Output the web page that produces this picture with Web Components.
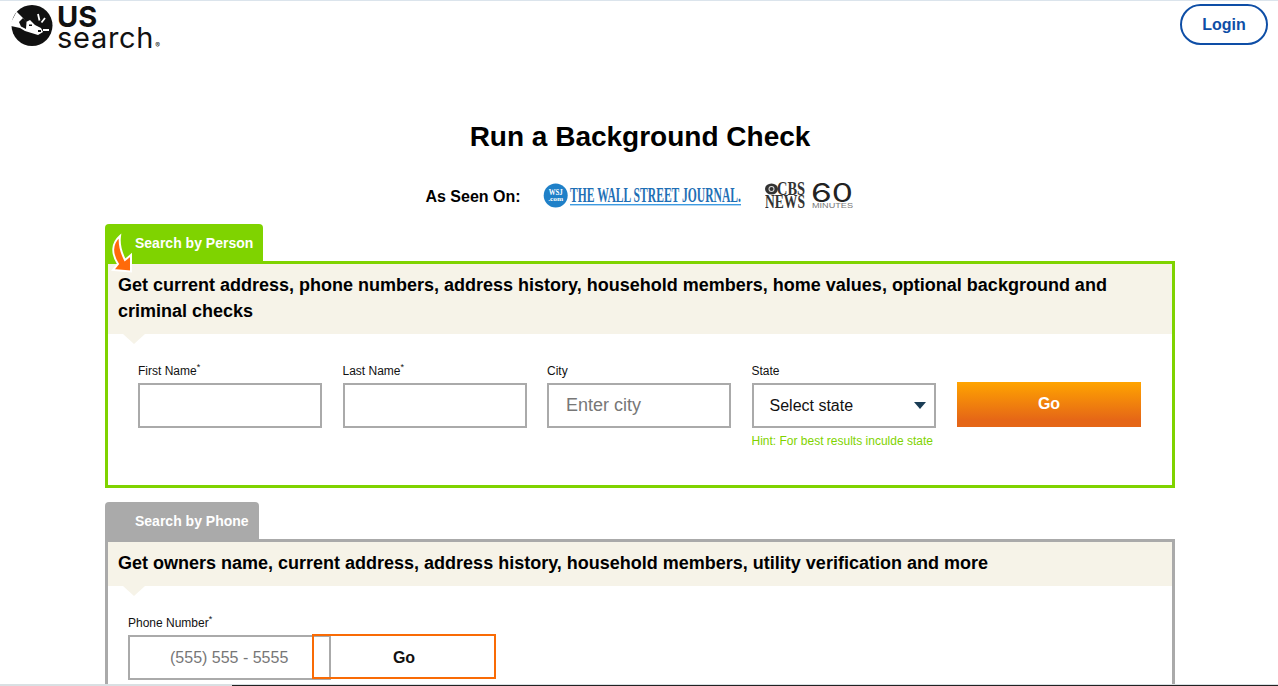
<!DOCTYPE html>
<html lang="en">
<head>
<meta charset="utf-8">
<title>Run a Background Check</title>
<style>
html, body { margin:0; padding:0; height:686px; overflow:hidden; background:#fff; font-family:"Liberation Sans", Arial, sans-serif; color:#000; }
</style>
</head>
<body>
<site-header></site-header>
<page-main>
  <search-panel tab="Search by Person" color="#7fd300" arrow
    headline="Get current address, phone numbers, address history, household members, home values, optional background and criminal checks">
    <person-form></person-form>
  </search-panel>
  <search-panel tab="Search by Phone" color="#aaaaaa"
    headline="Get owners name, current address, address history, household members, utility verification and more">
    <phone-form></phone-form>
  </search-panel>
</page-main>
<task-strip></task-strip>

<script>
// ===== HEADER =====
customElements.define('site-header', class extends HTMLElement {
    connectedCallback() {
        this.attachShadow({ mode: 'open' });
        this.shadowRoot.innerHTML = `
            <style>
                :host { display:flex; justify-content:space-between; align-items:flex-start; height:60px; border-top:1px solid #dbe4ec; box-sizing:border-box; padding:3px 10px 0 11px; }
                .logo { display:flex; gap:4px; }
                svg { margin-top:1px; }
                .words { display:flex; flex-direction:column; margin-top:1px; font-family:"Inter", sans-serif; color:#111; }
                .us { font-size:29px; font-weight:700; line-height:24px; letter-spacing:0; }
                .search { font-size:29px; font-weight:400; line-height:22px; letter-spacing:0.7px; margin-top:-2px; white-space:nowrap; }
                .search sup { font-size:7px; letter-spacing:0; line-height:0; vertical-align:baseline; margin-left:1px; }
                .login { width:88px; height:41px; box-sizing:border-box; border:2px solid #0e4ea6; border-radius:21px; display:flex; align-items:center; justify-content:center; color:#0e4ea6; font-size:16px; font-weight:700; }
            </style>
            <div class="logo">
                <svg width="42" height="41" viewBox="0 0 42 41">
                    <circle cx="21" cy="20.5" r="20.5" fill="#111"/>
                    <path fill="#fff" d="M6 6 -1 19 0 21 9 23 14 26 27 30 32 27 30 23 24 20 19 15 15 17 12 13 6 7Z"/>
                    <path fill="#111" d="M8 17 12 13 15.5 17 15 24 10 21.5Z"/>
                    <path fill="#111" d="M18 19.5h3v1.5h-3zM27 25h3v2h-3z"/>
                    <path stroke="#fff" stroke-width="1.8" fill="none" d="M27 9l1.5 6.5M34 13l-3.5 4.5M32 25h6"/>
                </svg>
                <div class="words">
                    <span class="us">US</span>
                    <span class="search">search<sup>&reg;</sup></span>
                </div>
            </div>
            <div class="login">Login</div>
        `;
    }
});

// ===== MAIN COLUMN =====
customElements.define('page-main', class extends HTMLElement {
    connectedCallback() {
        this.attachShadow({ mode: 'open' });
        this.shadowRoot.innerHTML = `
            <style>
                :host { display:block; width:1070px; height:626px; overflow:hidden; margin-left:105px; }
                h1 { margin:0; padding-top:61px; font-size:28px; line-height:32px; font-weight:700; text-align:center; }
                .slots { display:flex; flex-direction:column; gap:14px; }
            </style>
            <h1>Run a Background Check</h1>
            <seen-on></seen-on>
            <div class="slots"><slot></slot></div>
        `;
    }
});

// ===== AS SEEN ON =====
customElements.define('seen-on', class extends HTMLElement {
    connectedCallback() {
        this.attachShadow({ mode: 'open' });
        this.shadowRoot.innerHTML = `
            <style>
                :host { display:flex; align-items:center; justify-content:center; height:30px; margin-top:29px; margin-bottom:12px; }
                .label { font-size:16px; font-weight:700; margin-right:22px; }
                svg { display:block; }
                text { font-family:"Liberation Serif", serif; }
            </style>
            <span class="label">As Seen On:</span>
            <svg width="198" height="30" viewBox="0 0 198 30">
                <circle cx="12.7" cy="13.5" r="12" fill="#1f80c8"/>
                <text x="12.7" y="12.5" text-anchor="middle" font-size="9" font-weight="700" fill="#fff" textLength="14" lengthAdjust="spacingAndGlyphs">WSJ</text>
                <text x="12.7" y="19" text-anchor="middle" font-size="6" font-weight="700" fill="#fff" textLength="15" lengthAdjust="spacingAndGlyphs">.com</text>
                <text x="27" y="20" font-size="22" font-weight="700" fill="#1f6fb5" textLength="171" lengthAdjust="spacingAndGlyphs">THE WALL STREET JOURNAL.</text>
                <rect x="27" y="22" width="171" height="1.4" fill="#3d9ae0"/>
            </svg>
            <svg width="90" height="30" viewBox="0 0 90 30" style="margin-left:24px">
                <ellipse cx="6.5" cy="7" rx="6.5" ry="5.5" fill="#333"/>
                <ellipse cx="6.5" cy="7" rx="3" ry="3" fill="#ddd"/>
                <circle cx="6.5" cy="7" r="2" fill="#333"/>
                <text x="12" y="13" font-size="18" font-weight="700" fill="#333" textLength="28" lengthAdjust="spacingAndGlyphs">CBS</text>
                <text x="0" y="26" font-size="18" font-weight="700" fill="#333" textLength="40" lengthAdjust="spacingAndGlyphs">NEWS</text>
                <text x="46" y="20" font-size="26" fill="#222" textLength="42" lengthAdjust="spacingAndGlyphs" style="font-family:'Inter',sans-serif;font-weight:400">60</text>
                <text x="47" y="26" font-size="6.5" fill="#777" textLength="41" lengthAdjust="spacingAndGlyphs" style="font-family:'Liberation Sans',sans-serif">MINUTES</text>
            </svg>
        `;
    }
});

// ===== SEARCH PANEL =====
customElements.define('search-panel', class extends HTMLElement {
    connectedCallback() {
        const color = this.getAttribute('color');
        this.attachShadow({ mode: 'open' });
        this.shadowRoot.innerHTML = `
            <style>
                :host { display:block; position:relative; }
                .tab { display:inline-block; height:38px; line-height:38px; box-sizing:border-box; padding:0 10px 0 30px; background:${color}; color:#fff; font-size:14px; font-weight:700; border-radius:4px 4px 0 0; vertical-align:top; }
                .box { border:3px solid ${color}; margin-top:-1px; }
                .band { position:relative; background:#f6f3e8; padding:8px 10px 10px 10px; font-size:18px; line-height:26px; font-weight:700; }
                .band::after { content:""; position:absolute; left:15px; top:100%; border:solid transparent; border-width:10px 11px 0; border-top-color:#f6f3e8; }
                .arrow { position:absolute; left:3px; top:9px; }
            </style>
            <div class="tab">${this.getAttribute('tab')}</div>
            <div class="box">
                <div class="band">${this.getAttribute('headline')}</div>
                <slot></slot>
            </div>
            ${this.hasAttribute('arrow') ? `
            <svg class="arrow" width="28" height="44" viewBox="0 0 28 44">
                <path fill="#ff6a0a" stroke="#fff" stroke-width="2" d="M12 3C4 10 3 20 10 31L5 37 23 38.5V22L17 27C13 19 11 10 12 3Z"/>
            </svg>` : ''}
        `;
    }
});

// ===== FORM FIELDS =====
customElements.define('form-field', class extends HTMLElement {
    connectedCallback() {
        const req = this.hasAttribute('required') ? '<sup>*</sup>' : '';
        const hint = this.getAttribute('hint');
        const width = this.getAttribute('width') || '184';
        this.attachShadow({ mode: 'open' });
        this.shadowRoot.innerHTML = `
            <style>
                :host { display:block; width:${width}px; }
                label { display:block; font-size:12px; line-height:14px; height:14px; margin-bottom:5px; color:#111; white-space:nowrap; }
                sup { font-size:9px; line-height:0; }
                .input { display:flex; align-items:center; justify-content:space-between; box-sizing:border-box; height:45px; border:2px solid #aaa; background:#fff; font-size:18px; color:#777; }
                .hint { font-size:12px; line-height:14px; margin-top:6px; color:#7fd300; white-space:nowrap; }
            </style>
            <label>${this.getAttribute('label')}${req}</label>
            <div class="input"><slot></slot></div>
            ${hint ? `<div class="hint">${hint}</div>` : ''}
        `;
    }
});

customElements.define('field-text', class extends HTMLElement {
    connectedCallback() {
        this.attachShadow({ mode: 'open' });
        this.shadowRoot.innerHTML = `
            <style>
                :host { display:flex; flex:1; align-items:center; justify-content:space-between; padding:0 ${this.getAttribute('pad') || '17'}px; white-space:nowrap; }
                :host([select]) { color:#111; font-size:16px; padding-left:16px; padding-right:8px; }
                :host([small]) { font-size:16px; }
                i { width:0; height:0; border:solid transparent; border-width:7px 6.5px 0; border-top-color:#1a3d55; }
            </style>
            <span>${this.getAttribute('text') || ''}</span>
            ${this.hasAttribute('select') ? '<i></i>' : ''}
        `;
    }
});

customElements.define('go-button', class extends HTMLElement {
    connectedCallback() {
        this.attachShadow({ mode: 'open' });
        this.shadowRoot.innerHTML = `
            <style>
                :host { display:flex; align-items:center; justify-content:center; box-sizing:border-box; width:184px; height:45px; font-size:16px; font-weight:700; padding-bottom:2px; color:#fff; background:linear-gradient(#ffa400,#e56617 85%); }
                :host([outline]) { color:#111; background:transparent; border:2px solid #f96b05; padding-bottom:0; padding-top:2px; }
            </style>
            Go
        `;
    }
});

customElements.define('person-form', class extends HTMLElement {
    connectedCallback() {
        this.attachShadow({ mode: 'open' });
        this.shadowRoot.innerHTML = `
            <style>
                :host { display:flex; gap:20.5px; align-items:flex-start; padding:30px 0 0 30px; height:151px; box-sizing:border-box; }
                go-button { margin:18px 0 0 1px; }
            </style>
            <form-field label="First Name" required><field-text></field-text></form-field>
            <form-field label="Last Name" required><field-text></field-text></form-field>
            <form-field label="City"><field-text text="Enter city"></field-text></form-field>
            <form-field label="State" hint="Hint: For best results inculde state"><field-text select text="Select state"></field-text></form-field>
            <go-button></go-button>
        `;
    }
});

customElements.define('phone-form', class extends HTMLElement {
    connectedCallback() {
        this.attachShadow({ mode: 'open' });
        this.shadowRoot.innerHTML = `
            <style>
                :host { display:flex; align-items:flex-start; padding:30px 0 0 20px; height:160px; box-sizing:border-box; }
                go-button { margin:18px 0 0 -19px; }
            </style>
            <form-field label="Phone Number" required width="203"><field-text small pad="40" text="(555) 555 - 5555"></field-text></form-field>
            <go-button outline></go-button>
        `;
    }
});

// ===== BOTTOM STRIP =====
customElements.define('task-strip', class extends HTMLElement {
    connectedCallback() {
        this.attachShadow({ mode: 'open' });
        this.shadowRoot.innerHTML = `
            <style>
                :host { position:fixed; left:0; right:0; bottom:0; height:2px; display:flex; background:#d9e0e3; }
                .dark { margin-left:232px; flex:1; background:linear-gradient(#d9e0e3 1px,#222 1px); }
            </style>
            <div class="dark"></div>
        `;
    }
});
</script>
</body>
</html>
